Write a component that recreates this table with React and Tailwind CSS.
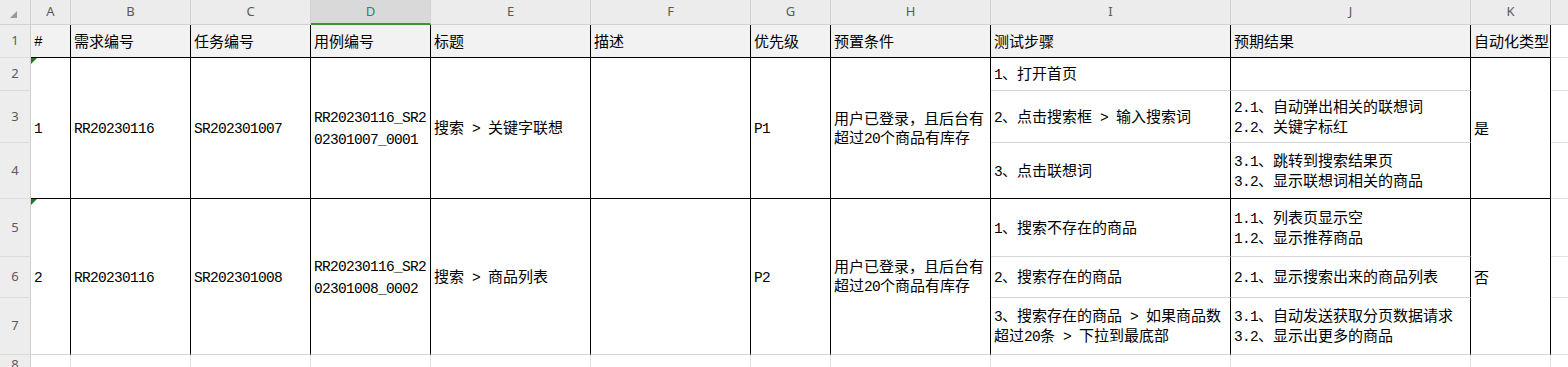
import React from "react";

const letters = ["A", "B", "C", "D", "E", "F", "G", "H", "I", "J", "K"];

const groups = [
  {
    no: "1",
    req: "RR20230116",
    task: "SR202301007",
    caseId: ["RR20230116_SR2", "02301007_0001"],
    title: "搜索 > 关键字联想",
    desc: "",
    pri: "P1",
    pre: ["用户已登录，且后台有", "超过20个商品有库存"],
    steps: [
      { s: ["1、打开首页"], e: [] },
      { s: ["2、点击搜索框 > 输入搜索词"], e: ["2.1、自动弹出相关的联想词", "2.2、关键字标红"] },
      { s: ["3、点击联想词"], e: ["3.1、跳转到搜索结果页", "3.2、显示联想词相关的商品"] },
    ],
    auto: "是",
  },
  {
    no: "2",
    req: "RR20230116",
    task: "SR202301008",
    caseId: ["RR20230116_SR2", "02301008_0002"],
    title: "搜索 > 商品列表",
    desc: "",
    pri: "P2",
    pre: ["用户已登录，且后台有", "超过20个商品有库存"],
    steps: [
      { s: ["1、搜索不存在的商品"], e: ["1.1、列表页显示空", "1.2、显示推荐商品"] },
      { s: ["2、搜索存在的商品"], e: ["2.1、显示搜索出来的商品列表"] },
      { s: ["3、搜索存在的商品 > 如果商品数", "超过20条 > 下拉到最底部"], e: ["3.1、自动发送获取分页数据请求", "3.2、显示出更多的商品"] },
    ],
    auto: "否",
  },
];

// latin runs in a mono face, CJK in Noto
const Mix = ({ text }) =>
  text
    .split(/([\x20-\x7e]+)/)
    .filter(Boolean)
    .map((p, i) =>
      /^[\x20-\x7e]+$/.test(p) ? (
        <span key={i} className="font-['Liberation_Mono',monospace] text-[14.5px] tracking-[-0.7px]">
          {p}
        </span>
      ) : (
        <span key={i}>{p}</span>
      )
    );

const Cell = ({ lines = [], className = "", children }) => (
  <div
    className={`relative flex flex-col justify-center overflow-hidden whitespace-pre pl-[3px] leading-[18px] border-r border-b border-r-black ${className}`}
  >
    {lines.map((l, i) => (
      <div key={i}>
        <Mix text={l} />
      </div>
    ))}
    {children}
  </div>
);

const RowHead = ({ n }) => (
  <div className="flex items-center justify-center bg-[#ededed] border-r border-b border-r-[#cfcfcf] border-b-[#dcdcdc] font-['Noto_Sans',sans-serif] text-[13px] text-[#5b5b5b]">
    {n}
  </div>
);

const Flag = () => (
  <svg className="absolute left-0 top-0" width="6" height="6" viewBox="0 0 6 6">
    <path d="M0 0H6L0 6Z" fill="#1e7b1e" />
  </svg>
);

const Extra = () => <div className="border-b border-b-[#e2e2e2]" />;

export default function App() {
  let rowNo = 2;
  return (
    <div className="h-[367px] w-[1568px] overflow-hidden bg-white font-['Noto_Sans_CJK_SC',sans-serif] text-[15px] text-black">
      <div className="grid h-[375px] grid-cols-[31px_40px_120px_120px_120px_160px_160px_80px_160px_240px_240px_80px_1fr] grid-rows-[25px_33px_33px_52px_56px_58px_41px_57px_20px]">
        {/* column letters */}
        <div className="relative bg-[#ececec] border-r border-b border-[#d2d2d2]">
          <svg className="absolute left-[10px] top-[11px]" width="7" height="7" viewBox="0 0 7 7">
            <path d="M7 0V7H0Z" fill="#9a9a9a" />
          </svg>
        </div>
        {letters.map((l) =>
          l === "D" ? (
            <div
              key={l}
              className="flex items-center justify-center bg-[#d9d9d9] border-r border-r-[#d2d2d2] border-b-2 border-b-[#3f9132] font-['Noto_Sans',sans-serif] text-[13px] text-[#1d8a6b]"
            >
              {l}
            </div>
          ) : (
            <div
              key={l}
              className="flex items-center justify-center bg-[#ececec] border-r border-b border-[#d2d2d2] font-['Noto_Sans',sans-serif] text-[13px] text-[#5a5a5a]"
            >
              {l}
            </div>
          )
        )}
        <div className="bg-[#ececec] border-b border-[#d2d2d2]" />

        {/* header row */}
        <RowHead n="1" />
        {["#", "需求编号", "任务编号", "用例编号", "标题", "描述", "优先级", "预置条件", "测试步骤", "预期结果", "自动化类型"].map(
          (h) => (
            <Cell key={h} lines={[h]} className="bg-[#f2f2f2] border-b-black" />
          )
        )}
        <Extra />

        {/* data groups */}
        {groups.map((g, gi) => {
          const bottom = gi === 0 ? "border-b-black" : "border-b-[#d6d6d6]";
          return g.steps.map((st, si) => {
            const n = rowNo++;
            const subBottom = si === g.steps.length - 1 ? bottom : "border-b-[#d6d6d6]";
            return (
              <React.Fragment key={`${gi}-${si}`}>
                <RowHead n={String(n)} />
                {si === 0 && (
                  <>
                    <Cell lines={[g.no]} className={`row-span-3 ${bottom}`}>
                      <Flag />
                    </Cell>
                    <Cell lines={[g.req]} className={`row-span-3 ${bottom}`} />
                    <Cell lines={[g.task]} className={`row-span-3 ${bottom}`} />
                    <Cell lines={g.caseId} className={`row-span-3 leading-[19px] ${bottom}`} />
                    <Cell lines={[g.title]} className={`row-span-3 ${bottom}`} />
                    <Cell lines={[]} className={`row-span-3 ${bottom}`} />
                    <Cell lines={[g.pri]} className={`row-span-3 ${bottom}`} />
                    <Cell lines={g.pre} className={`row-span-3 leading-[19px] ${bottom}`} />
                  </>
                )}
                <Cell lines={st.s} className={subBottom} />
                <Cell lines={st.e} className={subBottom} />
                {si === 0 && <Cell lines={[g.auto]} className={`row-span-3 ${bottom}`} />}
                <Extra />
              </React.Fragment>
            );
          });
        })}

        {/* row 8 */}
        <RowHead n="8" />
        {letters.map((l) => (
          <div key={l} className="border-r border-r-[#e2e2e2]" />
        ))}
        <div />
      </div>
    </div>
  );
}
